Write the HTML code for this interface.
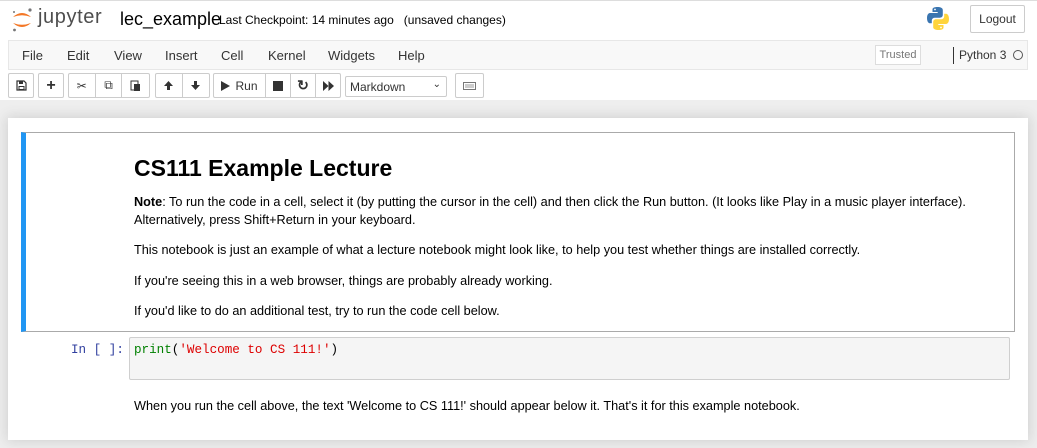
<!DOCTYPE html>
<html><head><meta charset="utf-8"><style>
*{margin:0;padding:0;box-sizing:border-box}
body{width:1037px;height:448px;overflow:hidden;background:#eee;font-family:"Liberation Sans",sans-serif;font-size:13px;color:#000;position:relative}
.a{position:absolute}
#top{left:0;top:0;width:1037px;height:100px;background:#fff;border-top:1px solid #ddd}
.btn{position:absolute;top:73px;height:25px;border:1px solid #ccc;border-radius:2px;background:#fff;display:flex;font-size:12px;color:#333}
.btn span{display:flex;align-items:center;justify-content:center;border-right:1px solid #ccc;height:100%}
.btn span:last-child{border-right:none}
.menu{top:48px;font-size:13px;color:#333}
p{position:absolute;left:134px;font-size:12.7px;line-height:18px}
.mono{font-family:"Liberation Mono",monospace;font-size:12.6px}
</style></head><body>
<div class="a" id="top"></div>
<svg class="a" style="left:10px;top:6px" width="26" height="28" viewBox="0 0 26 28">
<path d="M3 11 Q12 3 21 11 Q12 7.5 3 11Z" fill="#f37726"/>
<path d="M3 17 Q12 25 21 17 Q12 20.5 3 17Z" fill="#f37726"/>
<circle cx="20" cy="4" r="1.6" fill="#767677"/><circle cx="4.5" cy="24" r="1.4" fill="#767677"/><circle cx="4" cy="6" r="1" fill="#767677"/>
</svg>
<div class="a" style="left:38px;top:6px;font-size:20px;color:#4e4e4e;letter-spacing:0.6px">jupyter</div>
<div class="a" style="left:120px;top:9px;font-size:18px;color:#000">lec_example</div>
<div class="a" style="left:219px;top:13px;font-size:12px;color:#000">Last Checkpoint: 14 minutes ago&nbsp;&nbsp;&nbsp;(unsaved changes)</div>
<svg class="a" style="left:926px;top:6px" width="24" height="25" viewBox="0 0 24 25">
<path d="M11.5 1C6 1 6.5 3.5 6.5 3.5V6h5.2v1H4.3S1 6.6 1 12s3 5.3 3 5.3h1.8v-2.6s-.1-3 3-3h5.1s2.9 0 2.9-2.8V4S17.2 1 11.5 1z" fill="#3a75b0"/>
<path d="M12.5 24c5.5 0 5-2.5 5-2.5V19h-5.2v-1h7.4s3.300.4 3.3-5-3-5.3-3-5.3h-1.8v2.6s.1 3-3 3H10.1s-2.9 0-2.9 2.8V21s-.4 3 5.300 3z" fill="#ffd43b"/>
<circle cx="9" cy="3.5" r=".9" fill="#fff"/><circle cx="15" cy="21.5" r=".9" fill="#fff"/>
</svg>
<div class="a" style="left:970px;top:5px;width:55px;height:28px;border:1px solid #ccc;border-radius:2px;display:flex;align-items:center;justify-content:center;font-size:12px;color:#333">Logout</div>
<div class="a" style="left:8px;top:40px;width:1020px;height:30px;background:#f8f8f8;border:1px solid #e7e7e7"></div>
<div class="a menu" style="left:22px">File</div>
<div class="a menu" style="left:67px">Edit</div>
<div class="a menu" style="left:114px">View</div>
<div class="a menu" style="left:165px">Insert</div>
<div class="a menu" style="left:221px">Cell</div>
<div class="a menu" style="left:268px">Kernel</div>
<div class="a menu" style="left:328px">Widgets</div>
<div class="a menu" style="left:398px">Help</div>
<div class="a" style="left:875px;top:45px;width:46px;height:20px;border:1px solid #ddd;font-size:11px;color:#777;display:flex;align-items:center;justify-content:center;background:#fff;line-height:1">Trusted</div>
<div class="a" style="left:953px;top:47px;width:1px;height:17px;background:#333"></div>
<div class="a" style="left:959px;top:48px;font-size:12px;color:#333">Python 3</div>
<div class="a" style="left:1013px;top:50px;width:10px;height:10px;border:1.5px solid #555;border-radius:50%"></div>
<div class="btn" style="left:8px;width:26px"><span style="width:24px">
<svg width="11" height="11" viewBox="0 0 11 11"><path d="M1 1h7l2 2v7H1z" fill="none" stroke="#333" stroke-width="1.2"/><rect x="3" y="1" width="4" height="3" fill="#333"/><rect x="3" y="6.5" width="5" height="3" fill="none" stroke="#333"/></svg></span></div>
<div class="btn" style="left:38px;width:26px"><span style="width:24px;font-weight:bold;font-size:16px">+</span></div>
<div class="btn" style="left:68px;width:82px"><span style="width:27px;font-size:12px">✂</span><span style="width:27px">⧉</span><span style="width:27px"><svg width="11" height="12"><rect x="1" y="1" width="7" height="9" fill="#fff" stroke="#333"/><rect x="4" y="4" width="6" height="7" fill="#333"/></svg></span></div>
<div class="btn" style="left:155px;width:55px"><span style="width:27px"><svg width="11" height="11"><path d="M5.5 1L1 6h3v4h3V6h3z" fill="#333"/></svg></span><span style="width:27px"><svg width="11" height="11"><path d="M5.5 10L1 5h3V1h3v4h3z" fill="#333"/></svg></span></div>
<div class="btn" style="left:213px;width:128px"><span style="width:52px;gap:5px"><svg width="9" height="10"><path d="M0 0L9 5L0 10z" fill="#333"/></svg>Run</span><span style="width:25px"><svg width="10" height="10"><rect width="10" height="10" fill="#333"/></svg></span><span style="width:25px;font-weight:bold;font-size:14px">↻</span><span style="width:24px"><svg width="11" height="10"><path d="M0 0L5.5 5L0 10zM5.5 0L11 5L5.5 10z" fill="#333"/></svg></span></div>
<div class="a" style="left:345px;top:76px;width:102px;height:21px;border:1px solid #ccc;border-radius:2px;background:#fff;font-size:12px;color:#333;padding:3px 0 0 4px">Markdown<span style="position:absolute;right:5px;top:2px;font-size:10px">⌄</span></div>
<div class="btn" style="left:455px;width:29px"><span style="width:27px"><svg width="13" height="8"><rect x=".5" y=".5" width="12" height="7" fill="none" stroke="#777"/><path d="M2 3h9M2 5h9" stroke="#999"/></svg></span></div>
<div class="a" style="left:8px;top:118px;width:1020px;height:322px;background:#fff;box-shadow:0 0 12px 1px rgba(87,87,87,.2)"></div>
<div class="a" style="left:21px;top:132px;width:994px;height:200px;border:1px solid #aaa;border-left:5px solid #2196f3"></div>
<div class="a" style="left:134px;top:155px;font-size:23px;font-weight:bold">CS111 Example Lecture</div>
<p style="top:193px"><b>Note</b>: To run the code in a cell, select it (by putting the cursor in the cell) and then click the Run button. (It looks like Play in a music player interface).<br>Alternatively, press Shift+Return in your keyboard.</p>
<p style="top:241px">This notebook is just an example of what a lecture notebook might look like, to help you test whether things are installed correctly.</p>
<p style="top:272px">If you're seeing this in a web browser, things are probably already working.</p>
<p style="top:302px">If you'd like to do an additional test, try to run the code cell below.</p>
<div class="a mono" style="left:71px;top:343px;color:#303f9f">In&nbsp;[&nbsp;]:</div>
<div class="a" style="left:129px;top:337px;width:881px;height:43px;background:#f5f5f5;border:1px solid #cfcfcf;border-radius:2px"></div>
<div class="a mono" style="left:134px;top:343px"><span style="color:#008000">print</span>(<span style="color:#d00">'Welcome to CS 111!'</span>)</div>
<p style="top:397px">When you run the cell above, the text 'Welcome to CS 111!' should appear below it. That's it for this example notebook.</p>
</body></html>
